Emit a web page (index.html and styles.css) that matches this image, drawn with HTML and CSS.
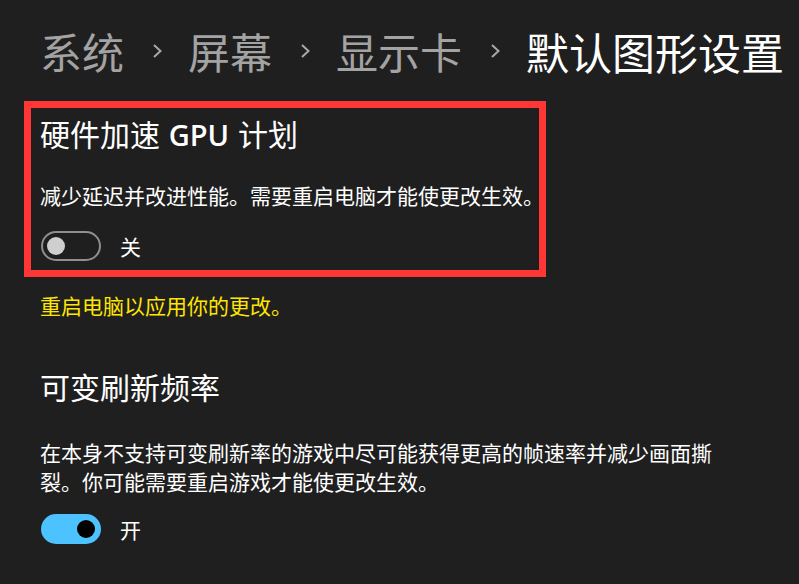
FILE: index.html
```html
<!DOCTYPE html>
<html lang="zh-CN">
<head>
<meta charset="utf-8">
<title>默认图形设置</title>
<link rel="stylesheet" href="styles.css">
</head>
<body>
<div class="page">
  <nav class="crumbs">
    <span class="crumb">系统</span>
    <svg class="chev" width="9" height="14" viewBox="0 0 9 14"><polyline points="1,1 7.5,7 1,13" fill="none" stroke="#a8a8a8" stroke-width="2"/></svg>
    <span class="crumb">屏幕</span>
    <svg class="chev" width="9" height="14" viewBox="0 0 9 14"><polyline points="1,1 7.5,7 1,13" fill="none" stroke="#a8a8a8" stroke-width="2"/></svg>
    <span class="crumb">显示卡</span>
    <svg class="chev" width="9" height="14" viewBox="0 0 9 14"><polyline points="1,1 7.5,7 1,13" fill="none" stroke="#a8a8a8" stroke-width="2"/></svg>
    <span class="crumb current">默认图形设置</span>
  </nav>

  <section class="box">
    <h2 class="title">硬件加速 <span class="latin">GPU</span> 计划</h2>
    <p class="desc nowrap">减少延迟并改进性能。需要重启电脑才能使更改生效。</p>
    <div class="toggle-row">
      <span class="toggle off"><span class="knob"></span></span>
      <span class="toggle-label">关</span>
    </div>
  </section>

  <section class="plain">
    <p class="warn">重启电脑以应用你的更改。</p>
    <h2 class="title title2">可变刷新频率</h2>
    <p class="desc desc2">在本身不支持可变刷新率的游戏中尽可能获得更高的帧速率并减少画面撕裂。你可能需要重启游戏才能使更改生效。</p>
    <div class="toggle-row row2">
      <span class="toggle on"><span class="knob"></span></span>
      <span class="toggle-label">开</span>
    </div>
  </section>
</div>
</body>
</html>
```

FILE: styles.css
```css
html, body {
  margin: 0;
  padding: 0;
  background: #201f1f;
  height: 100%;
  overflow: hidden;
}
body {
  font-family: "Noto Sans CJK SC", "Noto Sans", sans-serif;
  color: #ffffff;
}
.page {
  padding: 21px 0 0 24px;
}
.crumbs {
  display: flex;
  align-items: center;
  height: 60px;
  padding-left: 16px;
}
.crumb {
  font-size: 42px;
  line-height: 60px;
  color: #a3a3a3;
  white-space: nowrap;
}
.crumb.current {
  color: #ffffff;
  font-size: 43px;
}
.chev {
  display: block;
  margin: 0 26px 0 29px;
  flex: none;
}
.box {
  margin-top: 20px;
  width: 499px;
  border: 7px solid #ff3636;
  padding: 5px 0 9px 9px;
}
.plain {
  padding-left: 16px;
}
.title {
  margin: 0;
  height: 40px;
  font-size: 30px;
  line-height: 40px;
  font-weight: 400;
  color: #ffffff;
}
.latin {
  font-family: "Open Sans", "Noto Sans", sans-serif;
  font-weight: 600;
  font-size: 29px;
  line-height: 1;
  margin: 0 2px;
}
.desc {
  margin: 27px 0 0 0;
  font-size: 21px;
  line-height: 30px;
  color: #ffffff;
}
.nowrap {
  white-space: nowrap;
}
.toggle-row {
  display: flex;
  align-items: center;
  margin-top: 21px;
  height: 30px;
  padding-left: 1px;
}
.toggle {
  box-sizing: border-box;
  width: 60px;
  height: 30px;
  border-radius: 15px;
  display: flex;
  align-items: center;
  flex: none;
}
.toggle.off {
  border: 2px solid #8f8f8f;
  padding-left: 4px;
}
.toggle.on {
  background: #4cc2ff;
  justify-content: flex-end;
  padding-right: 6px;
}
.knob {
  width: 18px;
  height: 18px;
  border-radius: 50%;
}
.off .knob {
  background: #cfcfcf;
}
.on .knob {
  background: #000000;
}
.toggle-label {
  margin-left: 19px;
  font-size: 21px;
  line-height: 30px;
  color: #ffffff;
}
.warn {
  margin: 13px 0 0 0;
  font-size: 21px;
  line-height: 30px;
  color: #ffe600;
}
.title2 {
  margin-top: 46px;
}
.desc2 {
  margin-top: 32px;
  max-width: 682px;
  line-height: 29px;
}
.row2 {
  margin-top: 18px;
}
```
